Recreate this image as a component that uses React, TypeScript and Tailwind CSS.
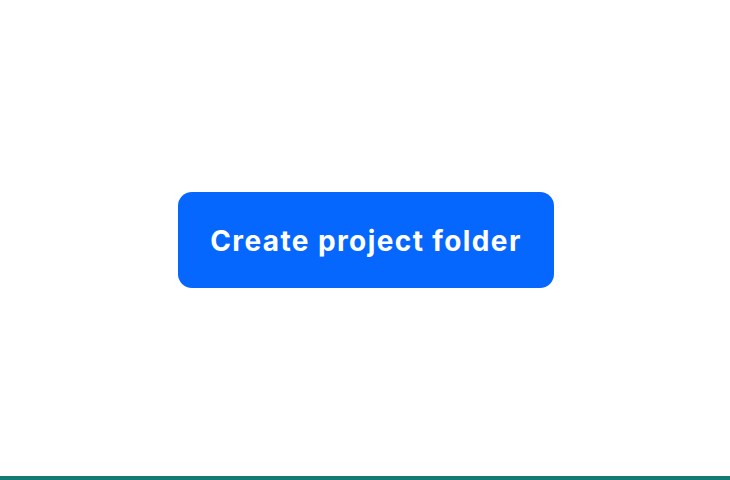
export default function App() {
  return (
    <div className="flex h-[480px] w-full flex-col bg-white font-['Inter',sans-serif]">
      <div className="flex flex-1 items-center justify-center pl-[2px] pt-[4px]">
        <button className="flex h-[96px] w-[376px] items-center justify-center rounded-[14px] bg-[#0667ff] pt-[2px] text-[28px] font-bold tracking-[0.05em] text-white">
          Create project folder
        </button>
      </div>
      <div className="h-[4px] w-full bg-[#137a74]" />
    </div>
  )
}
